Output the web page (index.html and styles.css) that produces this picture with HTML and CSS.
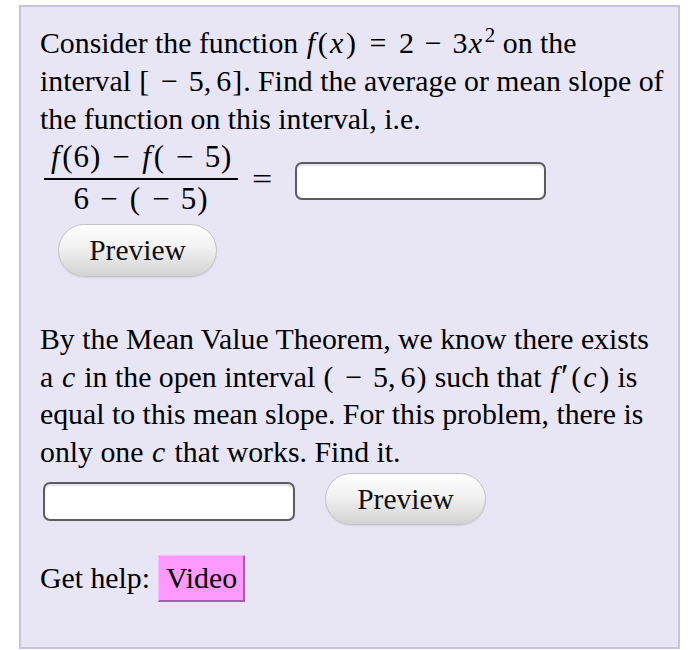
FILE: index.html
```html
<!DOCTYPE html>
<html>
<head>
<meta charset="utf-8">
<link rel="stylesheet" href="styles.css">
</head>
<body>
<div class="box">
  <p class="para">Consider the function <span class="m"><i class="mi">f</i><span class="paren">(</span><i class="mi">x</i><span class="paren">)</span><span class="rel">=</span>2<span class="bin">−</span>3<i class="mi">x</i><sup class="sup">2</sup></span> on the<br>interval <span class="m"><span class="brk">[</span><span class="bin">−</span>5,<span class="thin"></span>6<span class="brk">]</span></span>. Find the average or mean slope of<br>the function on this interval, i.e.</p>
  <div class="frac-row">
    <span class="frac">
      <span class="num"><i class="mi">f</i><span class="paren">(</span>6<span class="paren">)</span><span class="bin">−</span><i class="mi">f</i><span class="paren">(</span><span class="bin">−</span>5<span class="paren">)</span></span>
      <span class="den">6<span class="bin">−</span><span class="paren">(</span><span class="bin">−</span>5<span class="paren">)</span></span>
    </span>
    <span class="eq">=</span>
    <input class="answer answer-top" type="text">
  </div>
  <div class="btn-row">
    <button class="preview" type="button">Preview</button>
  </div>
  <p class="para para-two">By the Mean Value Theorem, we know there exists<br>a <i class="mi">c</i> in the open interval <span class="m"><span class="paren">(</span><span class="bin">−</span>5,<span class="thin"></span>6<span class="paren">)</span></span> such that <span class="m"><i class="mi">f</i><span class="prime">′</span><span class="paren">(</span><i class="mi">c</i><span class="paren">)</span></span> is<br>equal to this mean slope. For this problem, there is<br>only one <i class="mi">c</i> that works. Find it.</p>
  <div class="answer-row">
    <input class="answer answer-bottom" type="text">
    <button class="preview preview-two" type="button">Preview</button>
  </div>
  <div class="help">
    <span class="help-label">Get help:</span>
    <a class="video">Video</a>
  </div>
</div>
</body>
</html>
```

FILE: styles.css
```css
html, body {
  margin: 0;
  padding: 0;
  background: #ffffff;
}

body {
  font-family: "Liberation Serif", "Times New Roman", serif;
  color: #000;
}

.box {
  margin: 5px 0 0 19px;
  width: 661px;
  height: 644px;
  box-sizing: border-box;
  border: 2px solid #c6c3e3;
  background: #e8e6f4;
  padding: 17px 6px 0 19px;
  font-size: 29.8px;
  line-height: 38px;
}

.para {
  margin: 0;
  white-space: nowrap;
}

.para-two {
  margin-top: 43px;
  line-height: 37.5px;
}

.m {
  white-space: nowrap;
  font-size: 30px;
}

.mi {
  font-style: italic;
  padding: 0 0.06em 0 0.04em;
}

.paren {
  padding: 0 0.03em;
}

.brk {
  padding: 0 0.03em;
}

.bin {
  margin: 0 0.36em;
}

.rel {
  margin: 0 0.42em;
}

.thin {
  display: inline-block;
  width: 0.17em;
}

.prime {
  font-size: 1.15em;
  line-height: 0;
  margin: 0 0.05em 0 0.02em;
}

.sup {
  font-size: 0.7em;
  line-height: 0;
  vertical-align: 0.52em;
  margin-left: 0.05em;
}

.frac-row {
  display: flex;
  align-items: flex-start;
  height: 81px;
}

.frac {
  display: flex;
  flex-direction: column;
  align-items: center;
  width: 194px;
  margin-left: 4px;
  font-size: 31px;
  white-space: nowrap;
}

.num {
  display: block;
  width: 100%;
  text-align: center;
  line-height: 38px;
  padding-bottom: 2px;
  border-bottom: 2px solid #000;
}

.den {
  display: block;
  line-height: 38px;
}

.eq {
  margin-left: 14px;
  margin-top: 22px;
  font-size: 30px;
  line-height: 38px;
  transform: scaleX(1.2);
  transform-origin: left center;
}

.answer {
  box-sizing: border-box;
  background: #ffffff;
  border: 2px solid #5c5c63;
  border-radius: 7px;
  box-shadow: inset 0 2px 2px rgba(0, 0, 0, 0.12);
  padding: 0;
  margin: 0;
  outline: none;
}

.answer-top {
  width: 251px;
  height: 38px;
  margin-top: 24px;
  margin-left: 26px;
}

.btn-row {
  margin-top: 5px;
  display: flex;
}

.preview {
  width: 159px;
  height: 53px;
  margin: 0 0 0 18px;
  padding: 0;
  border: 1px solid #c3c3c6;
  border-radius: 27px;
  background: linear-gradient(#ffffff 0%, #f1f1f1 45%, #d3d3d3 100%);
  font-family: "Liberation Serif", "Times New Roman", serif;
  font-size: 29.5px;
  color: #111;
  box-shadow: 0 1px 1px rgba(0, 0, 0, 0.08);
}

.answer-row {
  margin-top: 3px;
  display: flex;
  align-items: flex-start;
}

.answer-bottom {
  width: 252px;
  height: 39px;
  margin-top: 9px;
  margin-left: 3px;
}

.preview-two {
  width: 161px;
  height: 52px;
  margin-left: 30px;
}

.help {
  margin-top: 30px;
  display: flex;
  align-items: baseline;
}

.video {
  margin-left: 8px;
  display: inline-block;
  background: #ff99ff;
  padding: 3px 6px 3px 7px;
  border-top: 1px solid #ffb8ff;
  border-left: 1px solid #ffb8ff;
  border-right: 2px solid #a85ea8;
  border-bottom: 2px solid #a85ea8;
  color: #000;
  line-height: 38px;
}
```
